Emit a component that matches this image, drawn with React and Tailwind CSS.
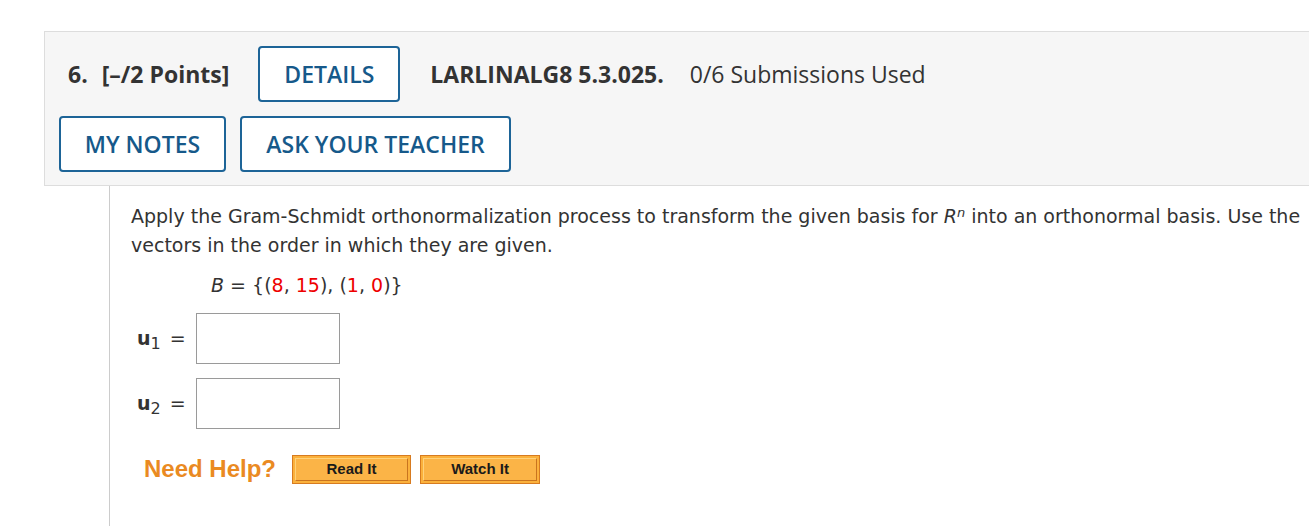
import React from "react";

const open = { fontFamily: '"Open Sans", "Liberation Sans", sans-serif' };
const verdana = { fontFamily: '"DejaVu Sans", Verdana, sans-serif' };
const arial = { fontFamily: '"Liberation Sans", Arial, sans-serif' };

function OutlineButton({ children, className = "" }) {
  return (
    <button
      className={`h-[56px] rounded-[4px] border-2 border-[#1d6497] bg-white text-[23px] font-semibold text-[#16598a] ${className}`}
      style={open}
    >
      {children}
    </button>
  );
}

function HelpButton({ children, className = "" }) {
  return (
    <button className={`h-[29px] border border-[#d77b20] bg-[#fbb13c] p-[2px] ${className}`} style={arial}>
      <span className="flex h-full w-full items-center justify-center border border-[#ffd27a] border-r-[#c9741f] border-b-[#c9741f] bg-[#fbb447] text-[15px] font-bold text-[#1a1a1a]">
        {children}
      </span>
    </button>
  );
}

function AnswerRow({ sub }) {
  return (
    <div className="flex items-center">
      <span className="w-[65px] pl-[6px] text-[19px] text-[#333]" style={verdana}>
        <b>u</b>
        <span className="relative top-[4px] text-[16px]">{sub}</span>
        <span className="ml-[9px]">=</span>
      </span>
      <div className="h-[51px] w-[144px] border border-[#9a9a9a] bg-white" />
    </div>
  );
}

export default function App() {
  return (
    <div className="min-h-[526px] overflow-hidden bg-white pl-[44px] pt-[31px]">
      {/* question header */}
      <div className="-mr-[40px] border border-[#dddddd] bg-[#f6f6f6] pb-[13px] pl-[14px] pt-[14px]" style={open}>
        <div className="flex items-center text-[23px] text-[#333]">
          <span className="ml-[9px] font-bold">6.</span>
          <span className="ml-[14px] font-bold">[–/2 Points]</span>
          <OutlineButton className="ml-[29px] w-[142px]">DETAILS</OutlineButton>
          <span className="ml-[30px] font-bold">LARLINALG8 5.3.025.</span>
          <span className="ml-[26px]">0/6 Submissions Used</span>
        </div>
        <div className="mt-[14px] flex gap-[14px]">
          <OutlineButton className="w-[167px]">MY NOTES</OutlineButton>
          <OutlineButton className="w-[271px]">ASK YOUR TEACHER</OutlineButton>
        </div>
      </div>

      {/* question body */}
      <div className="ml-[65px] min-h-[340px] border-l border-[#cccccc] pl-[21px] pt-[16px]">
        <p className="w-[1190px] text-[19px] leading-[29px] text-[#333]" style={verdana}>
          Apply the Gram-Schmidt orthonormalization process to transform the given basis for{" "}
          <i>R</i>
          <sup className="text-[13px] italic leading-none">n</sup> into an orthonormal basis. Use the vectors in the order in which they are given.
        </p>
        <p className="mt-[12px] pl-[80px] text-[19px] leading-[26px] text-[#333]" style={verdana}>
          <i>B</i> = {"{("}
          <span className="text-[#e00]">8</span>, <span className="text-[#e00]">15</span>), (
          <span className="text-[#e00]">1</span>, <span className="text-[#e00]">0</span>
          {")}"}
        </p>
        <div className="mt-[15px] flex flex-col gap-[14px]">
          <AnswerRow sub="1" />
          <AnswerRow sub="2" />
        </div>
        <div className="mt-[22px] flex items-center pl-[13px]">
          <span className="text-[24px] font-bold text-[#ea8a22]" style={arial}>
            Need Help?
          </span>
          <HelpButton className="ml-[16px] w-[119px]">Read It</HelpButton>
          <HelpButton className="ml-[9px] w-[120px]">Watch It</HelpButton>
        </div>
      </div>
    </div>
  );
}
